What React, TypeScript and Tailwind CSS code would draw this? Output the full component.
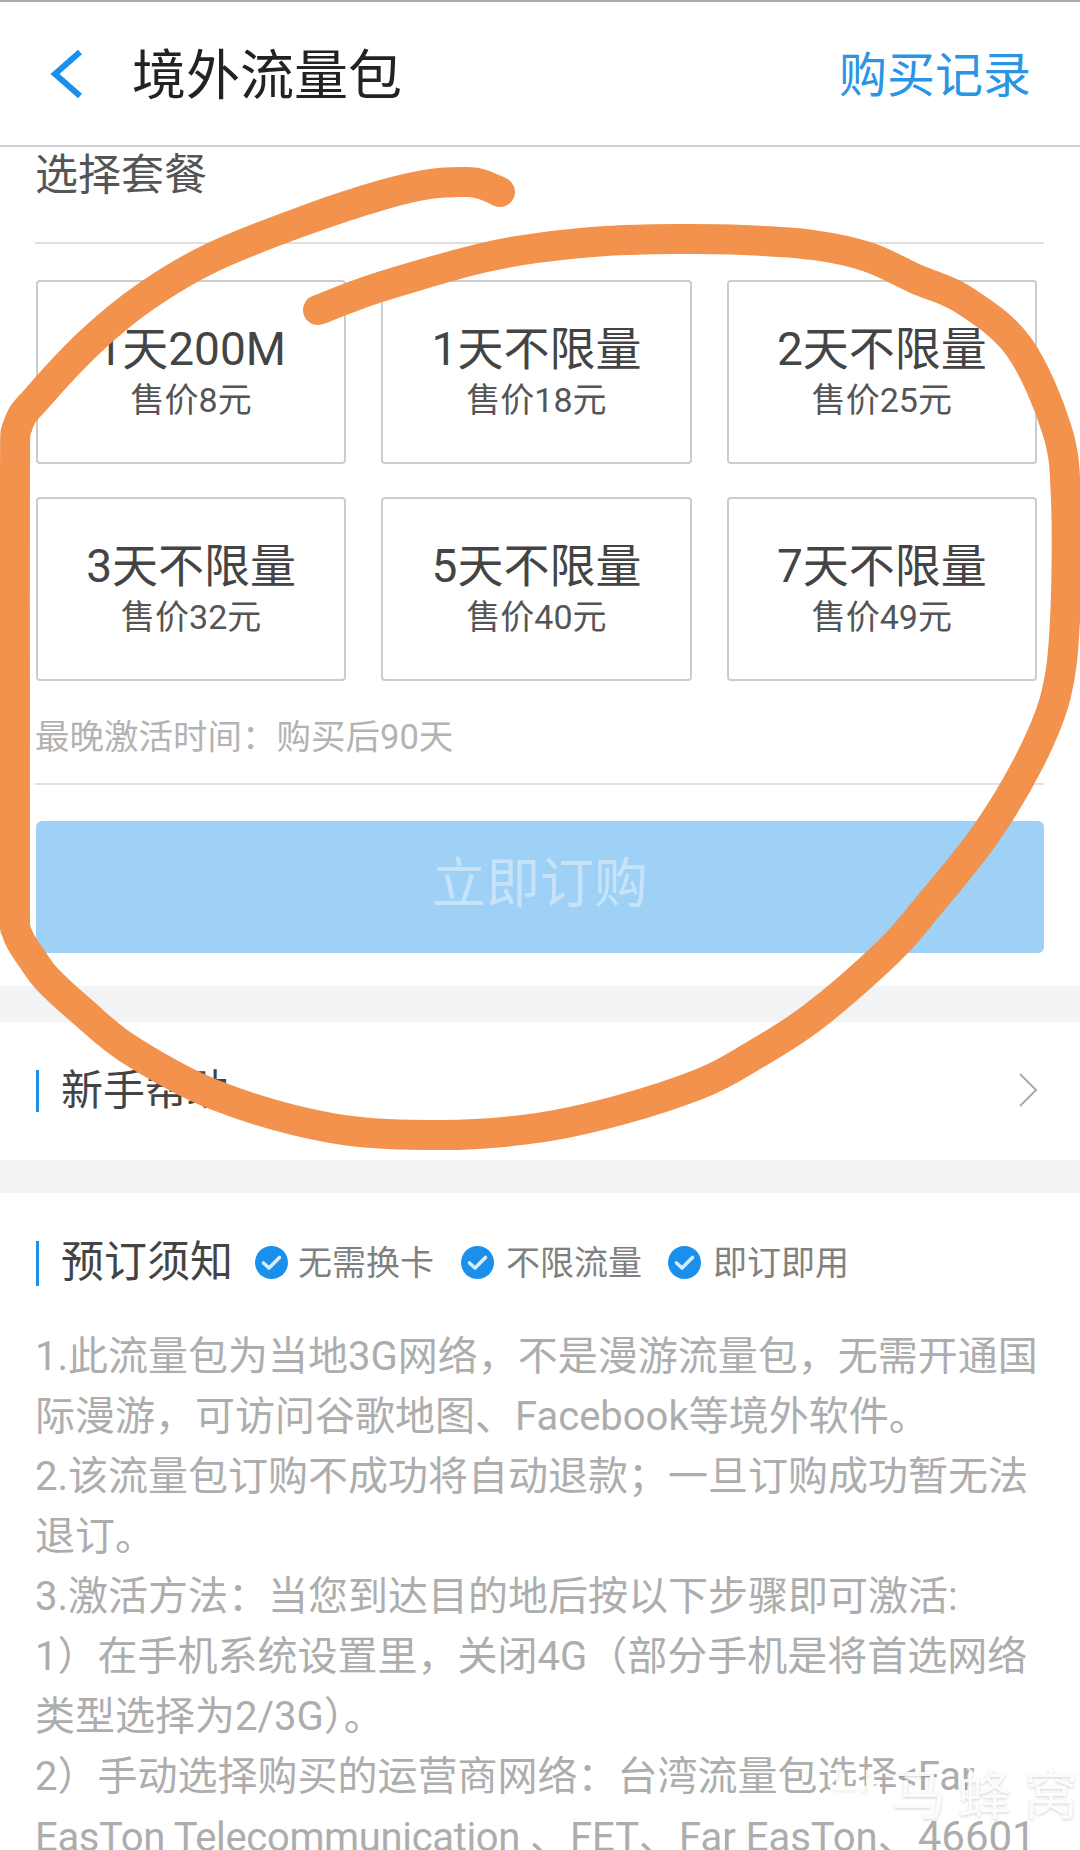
const FONT = "font-['Roboto','Noto_Sans_CJK_SC',sans-serif]";

const plans = [
  ['1天200M', '售价8元'],
  ['1天不限量', '售价18元'],
  ['2天不限量', '售价25元'],
  ['3天不限量', '售价32元'],
  ['5天不限量', '售价40元'],
  ['7天不限量', '售价49元'],
];

const paragraphs = [
  '1.此流量包为当地3G网络，不是漫游流量包，无需开通国际漫游，可访问谷歌地图、Facebook等境外软件。',
  '2.该流量包订购不成功将自动退款；一旦订购成功暂无法退订。',
  '3.激活方法：当您到达目的地后按以下步骤即可激活:',
  '1）在手机系统设置里，关闭4G（部分手机是将首选网络类型选择为2/3G）。',
];

function Check() {
  return (
    <svg width="33" height="33" viewBox="0 0 33 33" className="shrink-0">
      <circle cx="16.5" cy="16.5" r="16.5" fill="#1a8fec" />
      <path
        d="M8.5 17 L14 22 L24.5 11.5"
        fill="none"
        stroke="#d8edfc"
        strokeWidth="3.6"
        strokeLinecap="round"
        strokeLinejoin="round"
      />
    </svg>
  );
}

const pts: [number, number][] = [
  [500, 192], [484, 185], [468, 182], [430, 184], [382, 195], [306, 220], [213, 257], [145, 297], [90, 342], [38, 397],
  [18, 425], [15, 470], [15, 700], [15, 900], [17, 933], [33, 960], [48, 980], [84, 1013], [130, 1050], [215, 1095],
  [331, 1128], [441, 1135], [537, 1128], [620, 1110], [702, 1083], [751, 1057], [813, 1017], [888, 952], [925, 910],
  [985, 835], [1030, 760], [1056, 695], [1065, 620], [1066, 500], [1057, 430], [1019, 347], [964, 300], [916, 279],
  [868, 257], [813, 245], [744, 240], [675, 239], [606, 241], [537, 248], [482, 258], [413, 277], [365, 292], [318, 310],
];

function smooth(p: [number, number][]) {
  let d = `M${p[0][0]} ${p[0][1]}`;
  for (let i = 0; i < p.length - 1; i++) {
    const a = p[Math.max(i - 1, 0)];
    const b = p[i];
    const c = p[i + 1];
    const e = p[Math.min(i + 2, p.length - 1)];
    const c1x = b[0] + (c[0] - a[0]) / 6;
    const c1y = b[1] + (c[1] - a[1]) / 6;
    const c2x = c[0] - (e[0] - b[0]) / 6;
    const c2y = c[1] - (e[1] - b[1]) / 6;
    d += ` C${c1x.toFixed(1)} ${c1y.toFixed(1)} ${c2x.toFixed(1)} ${c2y.toFixed(1)} ${c[0]} ${c[1]}`;
  }
  return d;
}

export default function App() {
  return (
    <div className={`${FONT} relative w-[1080px] h-[1850px] overflow-hidden bg-white`}>
      <div className="h-[2px] bg-[#ababab]" />
      <header className="h-[145px] border-b-2 border-[#cfcfcf] flex items-center pl-[50px] pr-[49px]">
        <svg width="32" height="48" viewBox="0 0 32 48" className="shrink-0">
          <path d="M30 2 L5 24 L30 46" fill="none" stroke="#1a8fec" strokeWidth="6" />
        </svg>
        <h1 className="ml-[50px] mt-[7px] text-[54px] leading-none text-[#222]">境外流量包</h1>
        <div className="ml-auto mt-[5px] text-[48px] leading-none text-[#2a95e5]">购买记录</div>
      </header>

      <section className="px-[36px]">
        <div className="h-[97px] border-b-2 border-[#e0e0e0] pt-[3px] -ml-[1px] text-[43px] leading-[50px] text-[#555]">
          选择套餐
        </div>
        <div className="grid grid-cols-3 gap-x-[35px] gap-y-[33px] mt-[36px] w-[1001px]">
          {plans.map(([title, price]) => (
            <div
              key={title}
              className="h-[184px] border-2 border-[#cccccc] rounded-[4px] flex flex-col items-center pt-[39px]"
            >
              <div className="text-[46px] leading-[56px] text-[#444]">{title}</div>
              <div className="text-[34px] leading-[46px] text-[#555]">{price}</div>
            </div>
          ))}
        </div>
        <div className="mt-[30px] h-[74px] border-b-2 border-[#e0e0e0] text-[34.5px] leading-[52px] -ml-[1px] text-[#b3b3b3]">
          最晚激活时间：购买后90天
        </div>
        <button className="mt-[36px] w-full h-[132px] pb-[6px] rounded-[6px] bg-[#9fd0f5] text-[54px] text-[#c6e3f9] flex items-center justify-center">
          立即订购
        </button>
      </section>

      <div className="mt-[33px] h-[36px] bg-[#f2f3f5]" />
      <div className="h-[138px] flex items-center pl-[36px] pr-[42px]">
        <div className="w-[3px] h-[42px] bg-[#1a8fec]" />
        <div className="ml-[22px] text-[42px] leading-none text-[#444]">新手帮助</div>
        <svg width="20" height="34" viewBox="0 0 20 34" className="ml-auto -mt-[3px]">
          <path d="M2 1 L18 17 L2 33" fill="none" stroke="#aaaaaa" strokeWidth="2" />
        </svg>
      </div>
      <div className="h-[33px] bg-[#f2f3f5]" />

      <section className="px-[36px]">
        <div className="mt-[48px] flex items-center">
          <div className="w-[3px] h-[45px] bg-[#1a8fec]" />
          <div className="ml-[22px] -mt-[3px] text-[43px] leading-none text-[#444]">预订须知</div>
          <div className="ml-[22px] -mt-[2px] flex items-center gap-[10px]">
            <Check />
            <span className="text-[34px] leading-none text-[#808080]">无需换卡</span>
          </div>
          <div className="ml-[27px] -mt-[2px] flex items-center gap-[12px]">
            <Check />
            <span className="text-[34px] leading-none text-[#808080]">不限流量</span>
          </div>
          <div className="ml-[26px] -mt-[2px] flex items-center gap-[12px]">
            <Check />
            <span className="text-[34px] leading-none text-[#808080]">即订即用</span>
          </div>
        </div>
        <div className="mt-[41px] -ml-[1px] w-[1014px] text-[40px] leading-[60px] text-[#adadad]">
          {paragraphs.map((p) => (
            <p key={p}>{p}</p>
          ))}
          <p>
            2）手动选择购买的运营商网络：台湾流量包选择&lt;Far{' '}
            <span className="tracking-[-0.35px]">EasTon Telecommunication</span> 、FET、Far EasTon、
            <span className="text-[42px]">46601</span>
          </p>
        </div>
      </section>

      <svg
        className="absolute inset-0 pointer-events-none"
        width="1080"
        height="1850"
        viewBox="0 0 1080 1850"
      >
        <path d={smooth(pts)} fill="none" stroke="#f2924c" strokeWidth="30" strokeLinecap="round" strokeLinejoin="round" />
        <path
          d="M830 1782 L830 1808 Q832 1822 852 1822 Q876 1822 880 1808 L880 1782 L874 1786 L874 1770 L866 1770 L866 1786 L844 1786 L844 1770 L836 1770 L836 1786 Z"
          fill="#ffffff"
          fillOpacity="0.88"
        />
      </svg>
      <div className="absolute left-[892px] top-[1770px] flex gap-[12px] text-[54px] leading-[54px] text-white/90 [text-shadow:0_1px_3px_rgba(0,0,0,0.18)]">
        <span>马</span>
        <span>蜂</span>
        <span>窝</span>
      </div>
    </div>
  );
}
